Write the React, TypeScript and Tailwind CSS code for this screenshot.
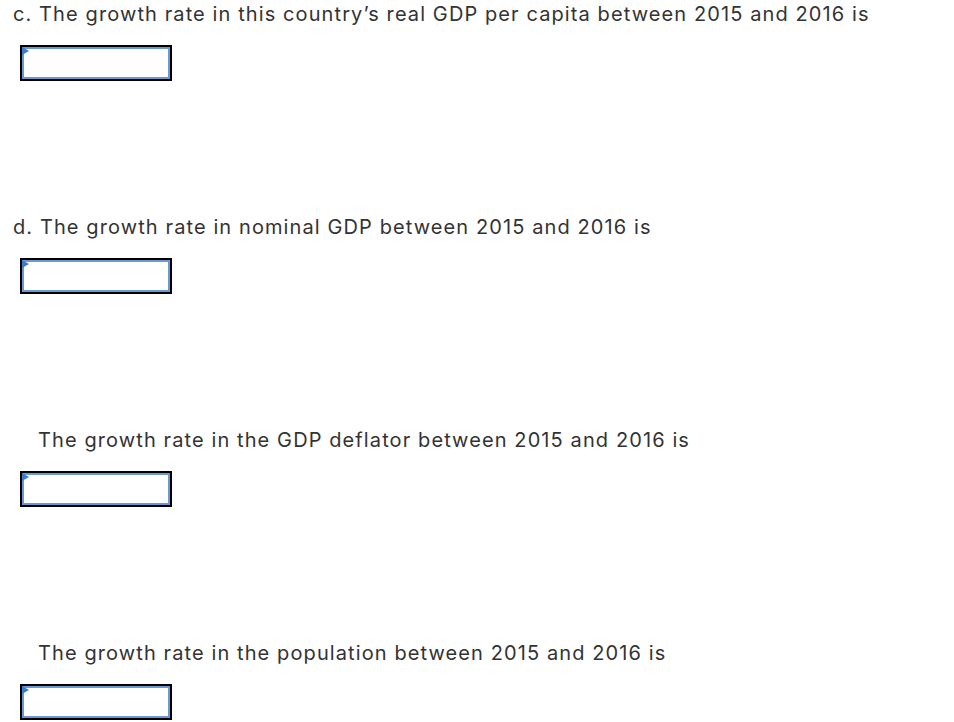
import React from 'react';

function AnswerBox() {
  return (
    <div className="relative mt-[19px] h-[36px] w-[152px] border-2 border-black bg-white">
      <div className="h-full w-full border-2 border-[#6a98d4]" />
      {/* small blue marker in the corner */}
      <span className="absolute left-0 top-0 h-0 w-0 border-y-[4px] border-l-[7px] border-y-transparent border-l-[#3b7bd0]" />
    </div>
  );
}

function Question({ text, indent }: { text: string; indent?: boolean }) {
  return (
    <div className="mb-[134px]">
      <p className={`text-[20px] leading-[24px] tracking-[1.1px] text-[#333333] ${indent ? 'pl-[25px]' : ''}`}>
        {text}
      </p>
      <div className="pl-[7px]">
        <AnswerBox />
      </div>
    </div>
  );
}

export default function App() {
  const items = [
    { text: 'c. The growth rate in this country\u2019s real GDP per capita between 2015 and 2016 is' },
    { text: 'd. The growth rate in nominal GDP between 2015 and 2016 is' },
    { text: 'The growth rate in the GDP deflator between 2015 and 2016 is', indent: true },
    { text: 'The growth rate in the population between 2015 and 2016 is', indent: true },
  ];

  return (
    <div
      className="h-[722px] overflow-hidden bg-white pl-[13px] pt-[2px]"
      style={{ fontFamily: 'Inter, "Liberation Sans", sans-serif' }}
    >
      {items.map((q) => (
        <Question key={q.text} text={q.text} indent={q.indent} />
      ))}
    </div>
  );
}
